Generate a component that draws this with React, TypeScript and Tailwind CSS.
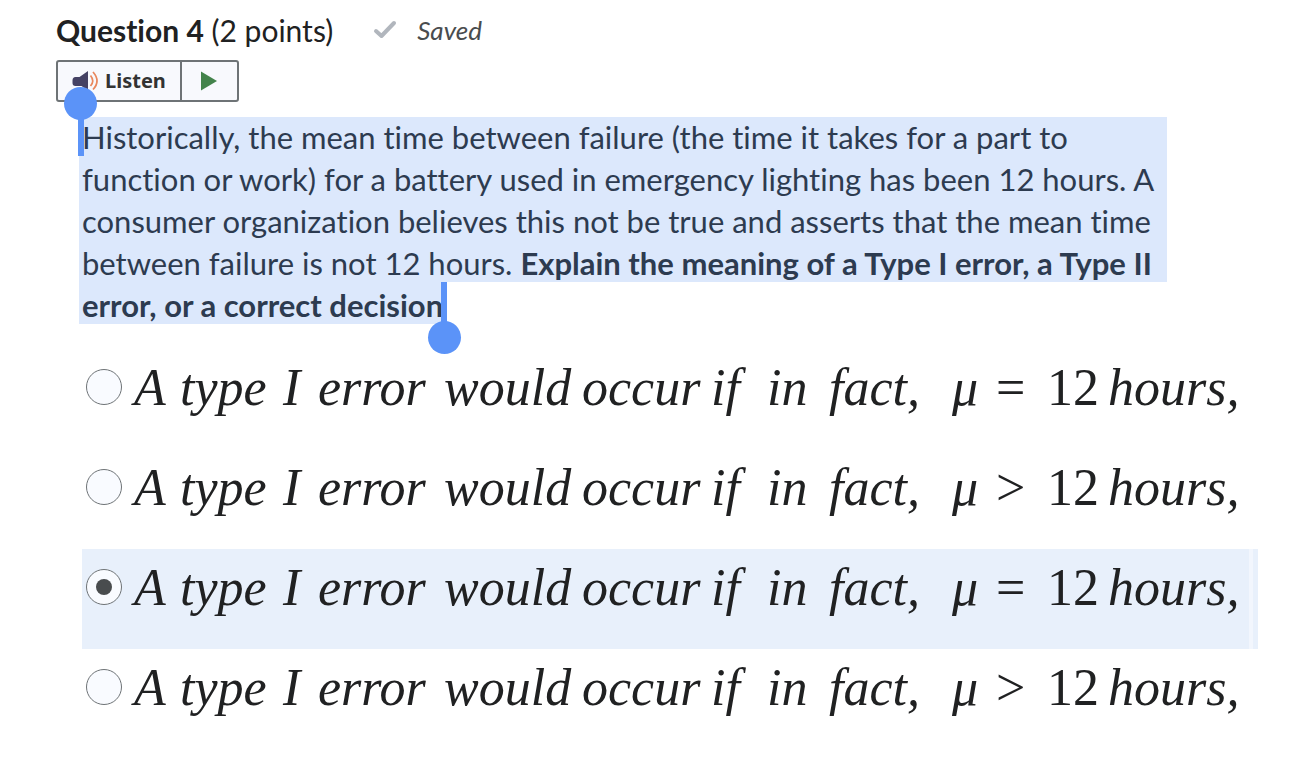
import { useState } from "react";

const questionLines = [
  "Historically, the mean time between failure (the time it takes for a part to",
  "function or work) for a battery used in emergency lighting has been 12 hours. A",
  "consumer organization believes this not be true and asserts that the mean time",
];

const options = [
  { id: "option-1", relation: "=" },
  { id: "option-2", relation: ">" },
  { id: "option-3", relation: "=" },
  { id: "option-4", relation: ">" },
];

const words = ["A", "type", "I", "error", "would", "occur", "if", "in", "fact,"];

function SpeakerIcon() {
  return (
    <svg width="27" height="22" viewBox="0 0 27 22" aria-hidden="true">
      <path d="M16 1v19.5L9.5 16H3.5Q0.500 16 0.500 13V10.500Q0.500 7 3.500 7H7.500Z" fill="#454264" />
      <path d="M18.500 5.500Q23 11 18.500 16" fill="none" stroke="#e9875d" strokeWidth="1.700" />
      <path d="M21 2Q29 11 21 19.500" fill="none" stroke="#e9875d" strokeWidth="1.700" />
    </svg>
  );
}

function Formula({ relation }: { relation: string }) {
  return (
    <span className="grid flex-1 grid-cols-[46fr_103fr_35fr_126fr_138fr_129fr_56fr_62fr_123fr_44fr_51fr_61fr_137fr] items-baseline whitespace-nowrap font-['Liberation_Serif',serif] text-[52px] leading-[62px] text-[#202122] italic">
      {words.map((word) => (
        <span key={word}>{word}</span>
      ))}
      <span>μ</span>
      <span className="not-italic">{relation}</span>
      <span className="not-italic">12</span>
      <span>hours,</span>
    </span>
  );
}

export default function App() {
  const [selected, setSelected] = useState("option-3");

  return (
    <main className="overflow-hidden bg-white pt-2 pr-8 pb-3 pl-14 font-['Lato',sans-serif] text-[#202122] [font-variant-ligatures:none]">
      <header className="flex h-11 items-center">
        <h1 className="text-[30px]">
          <strong>Question 4</strong> (2 points)
        </h1>
        <svg className="ml-10" width="24" height="20" viewBox="0 0 24 20" aria-hidden="true">
          <path
            d="M3 11L8.500 16L21 3"
            fill="none"
            stroke="#b1b6bd"
            strokeWidth="4"
            strokeLinecap="round"
            strokeLinejoin="round"
          />
        </svg>
        <span className="ml-5 text-[26px] text-[#494c4e] italic">Saved</span>
      </header>

      <div className="mt-2 flex h-[42px] w-fit rounded-[3px] border-2 border-[#6e7376] bg-[#f8f9fd]">
        <button
          type="button"
          className="flex items-center gap-1.5 pr-3.5 pl-3.5 font-['Noto_Sans',sans-serif] text-xl font-bold text-[#333]"
        >
          <SpeakerIcon />
          Listen
        </button>
        <button
          type="button"
          aria-label="Play"
          className="flex w-[57px] items-center justify-center border-l-2 border-[#6e7376]"
        >
          <svg width="16" height="20" viewBox="0 0 16 20" aria-hidden="true">
            <path d="M0 0.500L16 10L0 19.500Z" fill="#43834b" />
          </svg>
        </button>
      </div>

      {/* Question text with the active text selection */}
      <div className="relative mt-[15px] mr-[91px] ml-[23px] text-[31px] leading-[42px] whitespace-nowrap text-[#2d3b50]">
        <p>
          <span className="flow-root h-[165px] bg-[#dce8fc] pl-[3px]">
            <span className="-mt-px block">
              {questionLines.map((line) => (
                <span key={line} className="block">
                  {line}
                </span>
              ))}
              <span className="block">
                between failure is not 12 hours. <strong>Explain the meaning of a Type I error, a Type II</strong>
              </span>
            </span>
          </span>
          <span className="relative block h-[42px] w-fit bg-[#dce8fc] pl-[3px] leading-[46px]">
            <strong>error, or a correct decision</strong>
            <span className="absolute top-0 -right-1 h-[42px] w-1.5 bg-[#5b93f8]" />
            <span className="absolute top-[39px] -right-[18px] size-[33px] rounded-full bg-[#5b93f8]" />
          </span>
        </p>
        <span className="absolute top-0 -left-px h-[39px] w-1.5 bg-[#5b93f8]" />
        <span className="absolute -top-[30px] -left-[15px] size-[33px] rounded-full bg-[#5b93f8]" />
      </div>

      <fieldset aria-label="Answer options" className="mt-[25px] ml-[26px]">
        {options.map(({ id, relation }) => (
          <label key={id} htmlFor={id} className="flex h-[100px] items-start pt-2 pl-1 has-checked:bg-[#e8f0fb]">
            <input
              id={id}
              type="radio"
              name="answer"
              checked={selected === id}
              onChange={() => setSelected(id)}
              className="mt-3 grid size-9 shrink-0 appearance-none place-content-center rounded-full border border-[#6e7376] bg-[#f9fbff] before:size-4 before:rounded-full checked:before:bg-[#494c4e]"
            />
            <span className="ml-3 flex min-w-0 flex-1">
              <Formula relation={relation} />
            </span>
            <span className={selected === id ? "-mt-2 ml-1 h-[100px] w-1 bg-[#f2f6fd]" : "ml-1 w-1"} />
            <span className="w-[5px]" />
          </label>
        ))}
      </fieldset>
    </main>
  );
}
